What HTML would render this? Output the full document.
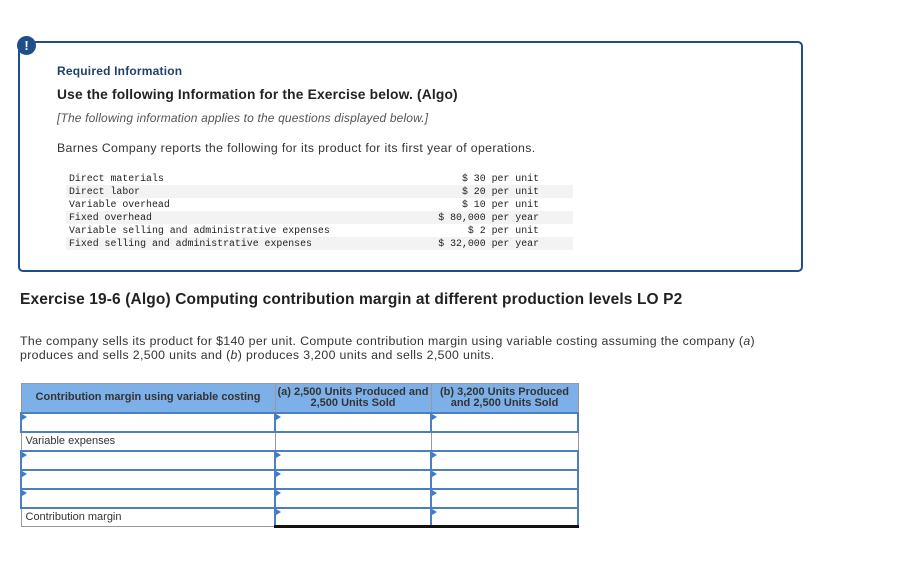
<!DOCTYPE html>
<html><head><meta charset="utf-8"><style>
*{margin:0;padding:0;box-sizing:border-box}
body{width:902px;height:581px;background:#fff;font-family:"Liberation Sans",sans-serif;color:#333;position:relative;overflow:hidden}
.box{position:absolute;left:18px;top:41px;width:785px;height:231px;border:2px solid #1f4e8c;border-radius:5px}
.badge{position:absolute;left:17px;top:36px;width:19px;height:19px;border-radius:50%;background:#1f4e8c;color:#fff;font-weight:bold;font-size:13px;text-align:center;line-height:19px}
.t{position:absolute;white-space:nowrap}
.mono{font-family:"Liberation Mono",monospace;font-size:9.9px;color:#222}
.row{position:absolute;left:66px;width:507px;height:13px}
.row.g{background:#f3f3f3}
.row span{position:absolute;top:0;line-height:13px}
.row .l{left:3px}.row .r{right:34px;text-align:right}
table{position:absolute;left:20px;top:383px;border-collapse:collapse;font-size:11px}
td{border:1px solid #999;height:19px;padding:0 4px}
th{background:#7db0e8;border:1px solid #999;font-weight:bold;color:#333;height:29px;line-height:11px;font-size:11px}
td.in{border:2px solid #4a7fc1;position:relative}
td.in:before{content:"";position:absolute;left:0;top:0;border-left:5px solid #3a7ad0;border-top:3px solid transparent;border-bottom:3px solid transparent}
</style></head><body>
<div class="box"></div>
<div class="badge">!</div>
<div class="t" style="left:57px;top:64px;font-size:12px;font-weight:bold;color:#1f3f6e;letter-spacing:0.2px">Required Information</div>
<div class="t" style="left:57px;top:87px;font-size:13.8px;font-weight:bold;color:#222;letter-spacing:0.16px">Use the following Information for the Exercise below. (Algo)</div>
<div class="t" style="left:57px;top:111px;font-size:12px;font-style:italic;color:#555;letter-spacing:0.15px">[The following information applies to the questions displayed below.]</div>
<div class="t" style="left:57px;top:141px;font-size:12.3px;color:#333;letter-spacing:0.35px">Barnes Company reports the following for its product for its first year of operations.</div>
<div class="mono">
<div class="row" style="top:172px"><span class="l">Direct materials</span><span class="r">$ 30 per unit</span></div>
<div class="row g" style="top:185px"><span class="l">Direct labor</span><span class="r">$ 20 per unit</span></div>
<div class="row" style="top:198px"><span class="l">Variable overhead</span><span class="r">$ 10 per unit</span></div>
<div class="row g" style="top:211px"><span class="l">Fixed overhead</span><span class="r">$ 80,000 per year</span></div>
<div class="row" style="top:224px"><span class="l">Variable selling and administrative expenses</span><span class="r">$ 2 per unit</span></div>
<div class="row g" style="top:237px"><span class="l">Fixed selling and administrative expenses</span><span class="r">$ 32,000 per year</span></div>
</div>
<div class="t" style="left:20px;top:291px;font-size:15.5px;font-weight:bold;color:#222;letter-spacing:0.13px">Exercise 19-6 (Algo) Computing contribution margin at different production levels LO P2</div>
<div class="t" style="left:20px;top:334px;font-size:12.3px;color:#333;line-height:14px;letter-spacing:0.36px">The company sells its product for $140 per unit. Compute contribution margin using variable costing assuming the company (<i>a</i>)<br>produces and sells 2,500 units and (<i>b</i>) produces 3,200 units and sells 2,500 units.</div>
<table>
<tr><th style="width:254px">Contribution margin using variable costing</th><th style="width:156px">(a) 2,500 Units Produced and<br>2,500 Units Sold</th><th style="width:147px">(b) 3,200 Units Produced<br>and 2,500 Units Sold</th></tr>
<tr><td class="in"></td><td class="in"></td><td class="in"></td></tr>
<tr><td>Variable expenses</td><td></td><td></td></tr>
<tr><td class="in"></td><td class="in"></td><td class="in"></td></tr>
<tr><td class="in"></td><td class="in"></td><td class="in"></td></tr>
<tr><td class="in"></td><td class="in"></td><td class="in"></td></tr>
<tr><td>Contribution margin</td><td class="in" style="border-bottom:3px solid #111"></td><td class="in" style="border-bottom:3px solid #111"></td></tr>
</table>
</body></html>
